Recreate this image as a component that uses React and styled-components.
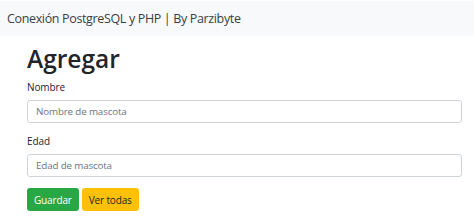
import React from "react";
import styled, { createGlobalStyle } from "styled-components";

const Global = createGlobalStyle`
  html, body { margin: 0; padding: 0; background: #fff; }
  body { font-family: "Open Sans", "Noto Sans", sans-serif; color: #212529; }
  * { box-sizing: border-box; }
`;

const Navbar = styled.nav`
  height: 35px;
  margin-top: 1px;
  background: #f8f9fa;
  display: flex;
  align-items: center;
  padding-left: 7px;
`;

const Brand = styled.span`
  font-size: 12.5px;
  letter-spacing: -0.35px;
  color: #3a3f44;
`;

const Container = styled.main`
  width: 474px;
  padding: 0 12px 0 27px;
`;

const Title = styled.h1`
  margin: 9px 0 0;
  font-size: 24.5px;
  font-weight: 600;
  letter-spacing: 0;
  line-height: 28px;
  color: #212529;
`;

const Group = styled.div`
  display: flex;
  flex-direction: column;
  margin-top: ${(p) => p.$top}px;
`;

const Label = styled.label`
  font-size: 10px;
  letter-spacing: -0.1px;
  line-height: 13px;
  color: #212529;
`;

const Input = styled.input`
  margin-top: 6px;
  height: 23px;
  width: 100%;
  border: 1px solid #ced4da;
  border-radius: 3px;
  padding: 0 8px;
  font-family: inherit;
  font-size: 9.8px;
  letter-spacing: -0.15px;
  color: #495057;
  background: #fff;
  &::placeholder { color: #6c757d; }
`;

const Actions = styled.div`
  display: flex;
  gap: 3px;
  margin-top: 11px;
`;

const Button = styled.button`
  height: 23px;
  padding: 0 7px;
  border: none;
  border-radius: 3px;
  font-family: inherit;
  font-size: 10px;
  letter-spacing: -0.15px;
  background: ${(p) => (p.$variant === "warning" ? "#ffc107" : "#28a745")};
  color: ${(p) => (p.$variant === "warning" ? "#212529" : "#fff")};
`;

export default function App() {
  return (
    <>
      <Global />
      <Navbar>
        <Brand>Conexión PostgreSQL y PHP | By Parzibyte</Brand>
      </Navbar>
      <Container>
        <Title>Agregar</Title>
        <Group $top={8}>
          <Label>Nombre</Label>
          <Input placeholder="Nombre de mascota" />
        </Group>
        <Group $top={12}>
          <Label>Edad</Label>
          <Input placeholder="Edad de mascota" />
        </Group>
        <Actions>
          <Button>Guardar</Button>
          <Button $variant="warning">Ver todas</Button>
        </Actions>
      </Container>
    </>
  );
}
